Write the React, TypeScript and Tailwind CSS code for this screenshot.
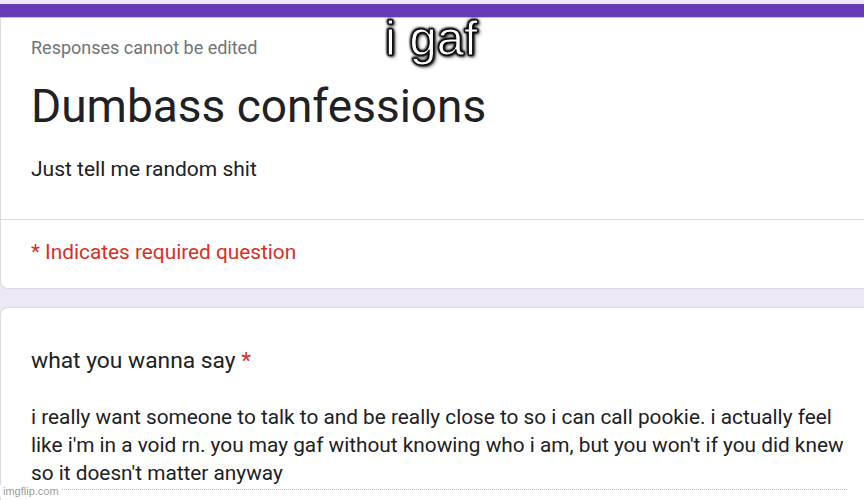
export default function App() {
  return (
    <div className="relative h-[500px] w-[864px] overflow-hidden bg-[#ede7f6] font-['Roboto',sans-serif]">
      <div className="w-[880px] pt-[4px]">
        <div className="h-[14px] border-b border-[#c9b6e8] bg-[#673ab7]" />
        <div className="rounded-b-lg border border-t-0 border-[#dadce0] bg-white">
          <div className="px-[30px] pb-[37px] pt-[20px]">
            <p className="text-[18px] leading-[20px] text-[#70757a]">Responses cannot be edited</p>
            <h1 className="mt-[22px] text-[46px] leading-[52px] text-[#202124]">Dumbass confessions</h1>
            <p className="mt-[24px] text-[21px] leading-[26px] text-[#202124]">Just tell me random shit</p>
          </div>
          <div className="border-t border-[#dadce0] px-[30px] pb-[23px] pt-[19px]">
            <p className="text-[20.8px] leading-[26px] text-[#d93025]">* Indicates required question</p>
          </div>
        </div>
        <div className="mt-[18px] rounded-t-lg border border-b-0 border-[#dadce0] bg-white pb-[30px] pl-[30px] pr-[32px] pt-[39px]">
          <p className="text-[22.8px] leading-[28px] text-[#202124]">
            what you wanna say <span className="text-[#d93025]">*</span>
          </p>
          <p className="mt-[28px] whitespace-nowrap text-[20.8px] leading-[28px] text-[#202124]">
            i really want someone to talk to and be really close to so i can call pookie. i actually feel
            <br />
            like i'm in a void rn. you may gaf without knowing who i am, but you won't if you did knew
            <br />
            so it doesn't matter anyway
          </p>
          <div className="mt-[2px] border-b border-dotted border-[#bdc1c6]" />
        </div>
      </div>
      <div className="absolute left-[385px] top-[13px] font-['Liberation_Sans',sans-serif] text-[49px] leading-[50px] text-white [-webkit-text-stroke:1px_#000] [text-shadow:0_0_3px_#000,0_0_3px_#000,0_0_3px_#000,1px_1px_3px_#000,-1px_-1px_3px_#000,2px_2px_4px_rgba(0,0,0,0.6)]">
        i gaf
      </div>
      <div className="absolute bottom-[3px] left-0 bg-white px-[3px] font-['Liberation_Sans',sans-serif] text-[11px] leading-[12px] text-[#9e9e9e]">
        imgflip.com
      </div>
    </div>
  )
}
